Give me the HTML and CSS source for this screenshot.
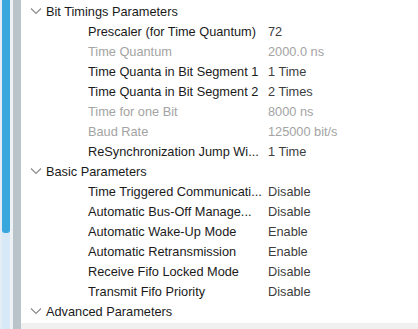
FILE: index.html
```html
<!DOCTYPE html>
<html>
<head>
<meta charset="utf-8">
<link rel="stylesheet" href="styles.css">
</head>
<body>
<div class="frame">
  <div class="sidebar">
    <div class="edge"></div>
    <div class="track"><div class="thumb"></div></div>
    <div class="gap"></div>
    <div class="sep"></div>
  </div>
  <div class="content">
    <div class="tree">
      <div class="group">
        <svg class="chev" width="12" height="8" viewBox="0 0 12 8"><path d="M1 1.5 L6 6.5 L11 1.5" fill="none" stroke="#8a8a8a" stroke-width="1.1"/></svg>
        <span class="gtitle">Bit Timings Parameters</span>
      </div>
      <div class="row"><span class="label">Prescaler (for Time Quantum)</span><span class="value">72</span></div>
      <div class="row dis"><span class="label">Time Quantum</span><span class="value">2000.0 ns</span></div>
      <div class="row"><span class="label">Time Quanta in Bit Segment 1</span><span class="value">1 Time</span></div>
      <div class="row"><span class="label">Time Quanta in Bit Segment 2</span><span class="value">2 Times</span></div>
      <div class="row dis"><span class="label">Time for one Bit</span><span class="value">8000 ns</span></div>
      <div class="row dis"><span class="label">Baud Rate</span><span class="value">125000 bit/s</span></div>
      <div class="row"><span class="label">ReSynchronization Jump Wi...</span><span class="value">1 Time</span></div>
      <div class="group">
        <svg class="chev" width="12" height="8" viewBox="0 0 12 8"><path d="M1 1.5 L6 6.5 L11 1.5" fill="none" stroke="#8a8a8a" stroke-width="1.1"/></svg>
        <span class="gtitle">Basic Parameters</span>
      </div>
      <div class="row"><span class="label">Time Triggered Communicati...</span><span class="value">Disable</span></div>
      <div class="row"><span class="label">Automatic Bus-Off Manage...</span><span class="value">Disable</span></div>
      <div class="row"><span class="label">Automatic Wake-Up Mode</span><span class="value">Enable</span></div>
      <div class="row"><span class="label">Automatic Retransmission</span><span class="value">Enable</span></div>
      <div class="row"><span class="label">Receive Fifo Locked Mode</span><span class="value">Disable</span></div>
      <div class="row"><span class="label">Transmit Fifo Priority</span><span class="value">Disable</span></div>
      <div class="group">
        <svg class="chev" width="12" height="8" viewBox="0 0 12 8"><path d="M1 1.5 L6 6.5 L11 1.5" fill="none" stroke="#8a8a8a" stroke-width="1.1"/></svg>
        <span class="gtitle">Advanced Parameters</span>
      </div>
    </div>
    <div class="hscroll"></div>
  </div>
</div>
</body>
</html>
```
FILE: styles.css
```css
html, body {
  margin: 0;
  padding: 0;
  background: #ffffff;
}
body {
  font-family: "Liberation Sans", Arial, sans-serif;
  font-size: 12.75px;
  color: #1a1a1a;
}
.frame {
  display: flex;
  width: 418px;
  height: 329px;
  overflow: hidden;
}
.sidebar {
  display: flex;
  flex: 0 0 21px;
  height: 329px;
}
.edge {
  width: 2px;
  background: #e4edf5;
}
.track {
  width: 8px;
  background: #d7e8f6;
  display: flex;
  flex-direction: column;
}
.thumb {
  height: 233px;
  background: #37a7dd;
  border-radius: 0 0 3px 3px;
}
.gap {
  width: 3px;
  background: #eef2f4;
}
.sep {
  width: 8px;
  background: #b9c4ca;
}
.content {
  flex: 1;
  display: flex;
  flex-direction: column;
  min-width: 0;
}
.tree {
  flex: 1;
  padding-top: 1px;
}
.group {
  height: 20px;
  display: flex;
  align-items: center;
}
.chev {
  margin-left: 9px;
  margin-right: 4px;
  flex: 0 0 12px;
}
.gtitle {
  color: #1a1a1a;
}
.row {
  height: 20px;
  display: flex;
  align-items: center;
  padding-left: 67px;
  white-space: nowrap;
}
.label {
  flex: 0 0 180px;
  color: #1a1a1a;
}
.value {
  color: #3c3c3c;
}
.row.dis .label,
.row.dis .value {
  color: #a3a3a3;
}
.hscroll {
  height: 6px;
  background: #f0f0f0;
}
```
